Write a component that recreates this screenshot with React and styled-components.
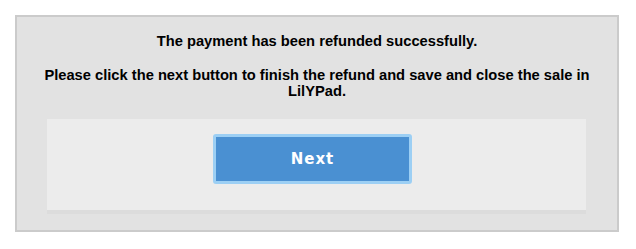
import React from 'react';
import styled, { createGlobalStyle } from 'styled-components';

const GlobalStyle = createGlobalStyle`
  html, body {
    margin: 0;
    padding: 0;
    background: #fff;
  }
  body {
    font-family: "Liberation Sans", Arial, sans-serif;
  }
`;

const Page = styled.div`
  padding: 15px 17px 17px 15px;
`;

const Panel = styled.div`
  box-sizing: border-box;
  width: 604px;
  height: 217px;
  background: #e2e2e2;
  border: 2px solid #cbcbcb;
  padding: 16px 0 0 0;
`;

const Message = styled.p`
  margin: 0 0 ${props => props.gap || 0}px 0;
  font-size: 14.7px;
  font-weight: bold;
  line-height: 16px;
  color: #000;
  text-align: center;
`;

const ActionBox = styled.div`
  margin: 20px 31px 0 30px;
  height: 91px;
  background: #ececec;
  box-shadow: 0 4px 0 #dcdcdc;
  display: flex;
  justify-content: center;
  align-items: flex-start;
  padding-top: 15px;
  box-sizing: border-box;
`;

const NextButton = styled.button`
  box-sizing: border-box;
  width: 199px;
  height: 50px;
  margin-right: 8px;
  background: #4a90d2;
  border: 3px solid #9ccff4;
  border-radius: 3px;
  color: #fff;
  font-family: "DejaVu Sans", Verdana, sans-serif;
  font-weight: bold;
  font-size: 15px;
  letter-spacing: 1px;
  cursor: pointer;
  padding: 0;
`;

const App = () => (
  <>
    <GlobalStyle />
    <Page>
      <Panel>
        <Message gap={18}>The payment has been refunded successfully.</Message>
        <Message>
          Please click the next button to finish the refund and save and close the sale in LilYPad.
        </Message>
        <ActionBox>
          <NextButton>Next</NextButton>
        </ActionBox>
      </Panel>
    </Page>
  </>
);

export default App;
